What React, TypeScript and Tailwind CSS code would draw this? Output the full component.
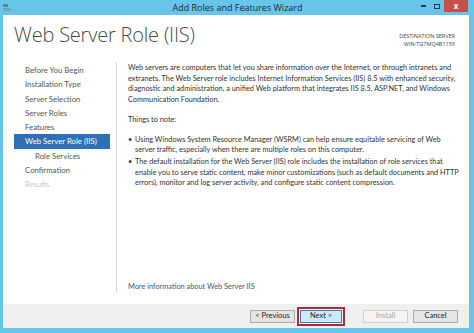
import React from "react";

const steps = [
  { label: "Before You Begin" },
  { label: "Installation Type" },
  { label: "Server Selection" },
  { label: "Server Roles" },
  { label: "Features" },
  { label: "Web Server Role (IIS)", active: true },
  { label: "Role Services", sub: true },
  { label: "Confirmation" },
  { label: "Results", disabled: true },
];

const font = { fontFamily: '"Open Sans", "Noto Sans", sans-serif' };
const body = { fontFamily: 'Lato, "Noto Sans", sans-serif' };

export default function App() {
  return (
    <div
      className="w-[474px] h-[333px] bg-[#66c5e9] flex flex-col overflow-hidden text-[#333]"
      style={font}
    >
      {/* Title bar */}
      <div className="h-[15px] flex items-center relative shrink-0">
        <div className="ml-[3px] w-[8px] h-[8px] flex flex-col gap-[1px] opacity-70">
          <div className="h-[3px] w-[5px] bg-[#4a6a80]" />
          <div className="h-[3px] w-[8px] bg-[#7a94a6]" />
        </div>
        <div className="flex-1 text-center text-[9px] text-[#1d2a33] leading-none pl-[48px]">
          Add Roles and Features Wizard
        </div>
        <div className="flex items-start self-start mr-[6px]">
          <div className="w-[14px] h-[12px] flex items-center justify-center">
            <div className="w-[5px] h-[2px] bg-[#1b3a4d]" />
          </div>
          <div className="w-[14px] h-[12px] flex items-center justify-center">
            <div className="w-[6px] h-[5px] border-[1.5px] border-[#1b3a4d]" />
          </div>
          <div className="w-[24px] h-[12px] bg-[#c7504a] flex items-center justify-center text-white text-[8px] font-bold leading-none">
            x
          </div>
        </div>
      </div>

      {/* Window body */}
      <div className="flex-1 ml-[3px] mr-[5px] mb-[5px] bg-white flex flex-col min-h-0">
        {/* Header */}
        <div className="h-[47px] flex justify-between shrink-0">
          <div className="pl-[11px] pt-[10px] text-[20px] font-light text-[#4a4a4a] leading-none tracking-[-0.2px]">
            Web Server Role (IIS)
          </div>
          <div className="pr-[14px] pt-[17px] text-right text-[5.5px] leading-[8px] text-[#444] uppercase">
            <div>Destination Server</div>
            <div>WIN-TG7MQ4B1159</div>
          </div>
        </div>

        {/* Main area */}
        <div className="flex-1 flex min-h-0" style={body}>
          {/* Left nav */}
          <div className="w-[114px] pl-[11px] pt-[1px] shrink-0 border-r border-[#d6d6d6] mb-[12px]">
            {steps.map((s) => (
              <div
                key={s.label}
                className={
                  s.active
                    ? "h-[14.3px] w-[96px] bg-[#2f6fb4] text-white text-[7.8px] leading-[14.3px] pl-[11px]"
                    : s.disabled
                    ? "h-[14.3px] text-[7.8px] leading-[14.3px] text-[#c8c8c8] pl-[11px]"
                    : s.sub
                    ? "h-[14.3px] text-[7.8px] leading-[14.3px] text-[#555] pl-[21px]"
                    : "h-[14.3px] text-[7.8px] leading-[14.3px] text-[#555] pl-[11px]"
                }
              >
                {s.label}
              </div>
            ))}
          </div>

          {/* Content */}
          <div className="flex-1 pl-[11px] pr-[10px] pt-[1px] flex flex-col text-[7.35px] leading-[10.7px] text-[#333] min-h-0 whitespace-nowrap">
            <p>
              Web servers are computers that let you share information over the Internet, or through intranets and
              <br />
              extranets. The Web Server role includes Internet Information Services (IIS) 8.5 with enhanced security,
              <br />
              diagnostic and administration, a unified Web platform that integrates IIS 8.5, ASP.NET, and Windows
              <br />
              Communication Foundation.
            </p>
            <p className="mt-[9px]">Things to note:</p>
            <ul className="mt-[9px] flex flex-col gap-[1px]">
              <li className="flex">
                <span className="w-[7px] shrink-0">•</span>
                <span>
                  Using Windows System Resource Manager (WSRM) can help ensure equitable servicing of Web
                  <br />
                  server traffic, especially when there are multiple roles on this computer.
                </span>
              </li>
              <li className="flex">
                <span className="w-[7px] shrink-0">•</span>
                <span>
                  The default installation for the Web Server (IIS) role includes the installation of role services that
                  <br />
                  enable you to serve static content, make minor customizations (such as default documents and HTTP
                  <br />
                  errors), monitor and log server activity, and configure static content compression.
                </span>
              </li>
            </ul>
            <div className="mt-auto mb-[11px] text-[#3a5a7a]">More information about Web Server IIS</div>
          </div>
        </div>

        {/* Footer */}
        <div className="h-[24px] bg-[#f0f0f0] shrink-0 flex items-center justify-end pr-[11px] text-[7.5px]" style={body}>
          <button className="w-[45px] h-[13px] border border-[#acacac] bg-[#e5e5e5] text-[#222] leading-none">
            &lt; Previous
          </button>
          <div className="ml-[2px] border-[2px] border-[#b0283a] p-[1px]">
            <button className="w-[42px] h-[13px] border border-[#3c7fb1] bg-[#cde8fb] text-[#222] leading-none">
              Next &gt;
            </button>
          </div>
          <button className="ml-[18px] w-[45px] h-[13px] border border-[#d0d0d0] bg-[#f4f4f4] text-[#a8a8a8] leading-none">
            Install
          </button>
          <button className="ml-[5px] w-[45px] h-[13px] border border-[#acacac] bg-[#e5e5e5] text-[#222] leading-none">
            Cancel
          </button>
        </div>
      </div>
    </div>
  );
}
